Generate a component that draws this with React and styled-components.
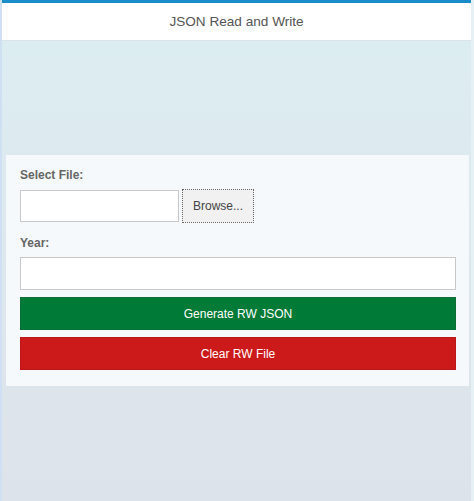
import React from 'react';
import styled, { createGlobalStyle } from 'styled-components';

const GlobalStyle = createGlobalStyle`
  html, body {
    margin: 0;
    padding: 0;
    height: 100%;
  }
  body {
    font-family: "Liberation Sans", Arial, sans-serif;
  }
  #root {
    height: 100%;
  }
`;

const Page = styled.div`
  height: 501px;
  display: flex;
  flex-direction: column;
  border-left: 2px solid #cfe0f4;
  border-right: 3px solid #e6f1f6;
  background: linear-gradient(180deg, #dceef3 0%, #dde6ec 70%, #dde3ea 100%);
  box-sizing: border-box;
`;

const Header = styled.header`
  border-top: 3px solid #1b8ccb;
  background: #ffffff;
  border-bottom: 1px solid #d9e3e8;
  height: 37px;
  display: flex;
  align-items: center;
  justify-content: center;
  font-size: 13.6px;
  color: #555;
`;

const Content = styled.main`
  padding: 114px 2px 0 4px;
`;

const Card = styled.section`
  background: #f5f9fb;
  padding: 12px 13px 16px 14px;
  display: flex;
  flex-direction: column;
`;

const Label = styled.label`
  font-size: 12px;
  font-weight: bold;
  color: #666;
  line-height: 16px;
  margin-bottom: ${p => p.$gap || 6}px;
`;

const FileRow = styled.div`
  display: flex;
  align-items: center;
  gap: 3px;
  margin-bottom: 12px;
`;

const TextInput = styled.input`
  box-sizing: border-box;
  width: ${p => p.$width || '100%'};
  height: ${p => p.$height || 33}px;
  border: 1px solid #c9c9c9;
  background: #fff;
  padding: 0 8px;
  font-family: inherit;
  font-size: 12px;
  margin: 0;
  outline: none;
`;

const BrowseButton = styled.button`
  box-sizing: border-box;
  width: 72px;
  height: 34px;
  border: 1px dotted #6a6a6a;
  background: #f1f1f1;
  color: #444;
  font-family: inherit;
  font-size: 12px;
  padding: 0;
`;

const ActionButton = styled.button`
  box-sizing: border-box;
  width: 100%;
  height: 33px;
  border: 1px solid ${p => p.$border};
  background: ${p => p.$bg};
  color: #fff;
  font-family: inherit;
  font-size: 12px;
  margin-top: 7px;
  padding: 0;
`;

const App = () => {
  return (
    <>
      <GlobalStyle />
      <Page>
        <Header>JSON Read and Write</Header>
        <Content>
          <Card>
            <Label>Select File:</Label>
            <FileRow>
              <TextInput $width="159px" $height={32} readOnly />
              <BrowseButton>Browse...</BrowseButton>
            </FileRow>
            <Label>Year:</Label>
            <TextInput type="text" />
            <ActionButton $bg="#007a37" $border="#0a6e35">Generate RW JSON</ActionButton>
            <ActionButton $bg="#cc1a1a" $border="#b81818">Clear RW File</ActionButton>
          </Card>
        </Content>
      </Page>
    </>
  );
};

export default App;
